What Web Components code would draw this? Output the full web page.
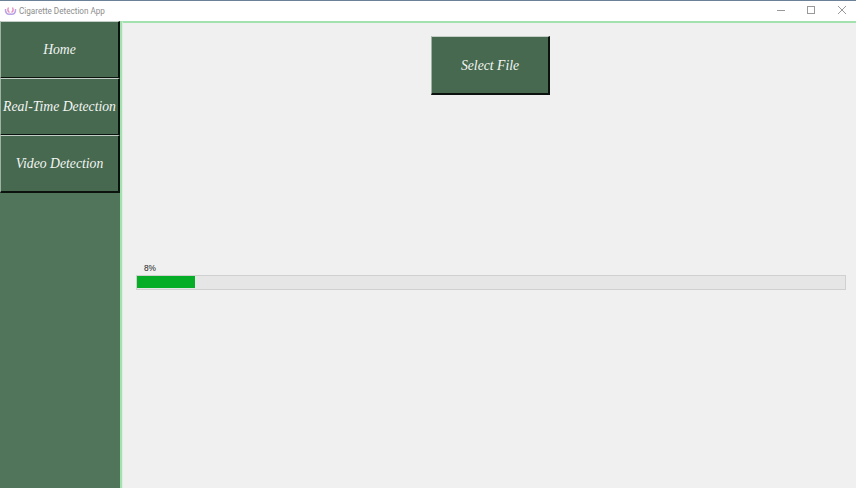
<!DOCTYPE html>
<html>
<head>
<meta charset="utf-8">
<title>Cigarette Detection App</title>
<style>
  html, body { margin: 0; height: 100%; overflow: hidden; background: #f0f0f0; }
</style>
</head>
<body>
<app-window title-text="Cigarette Detection App">
  <side-nav slot="nav">
    <nav-button>Home</nav-button>
    <nav-button>Real-Time Detection</nav-button>
    <nav-button>Video Detection</nav-button>
  </side-nav>
  <file-panel percent="8"></file-panel>
</app-window>

<script>
(() => {
  const GREEN__BUTTON = '#46694f';
  const GREEN__SIDE = '#50755a';
  const FONT__SERIF = '"Liberation Serif", "Times New Roman", serif';

  class AppWindow extends HTMLElement {
    constructor() {
      super();
      this.attachShadow({ mode: 'open' });
    }

    connectedCallback() {
      this.shadowRoot.innerHTML = `
        <style>
          *, *::before, *::after { box-sizing: border-box; }

          :host {
            width: 856px;
            height: 488px;
            display: flex;
            flex-direction: column;
            overflow: hidden;
          }

          .title-bar {
            height: 21px;
            flex: none;
            display: flex;
            align-items: center;
            background: #fff;
            border-top: solid 1px #6b8198;
            font: 8.15px Roboto, "Liberation Sans", Arial, sans-serif;
            color: #8d8d8d;
          }
          .logo { margin: 0 2px 0 4px; flex: none; }
          .title { flex: 1; }
          .controls { display: flex; height: 100%; }
          .controls svg { width: 31px; height: 20px; display: block; }

          .body {
            flex: 1;
            min-height: 0;
            display: flex;
          }
          .nav {
            width: 122px;
            flex: none;
            background: ${GREEN__SIDE};
            border-right: solid 2px #a3e2ae;
          }
          .main {
            flex: 1;
            min-width: 0;
            background: #f0f0f0;
            border-top: solid 2px #a3e2ae;
            border-left: solid 1px #dcefe0;
          }
        </style>

        <div class="title-bar">
          <svg class="logo" width="13" height="11" viewBox="0 0 13 11" fill="none">
            <path d="M1.500 3C1 7 3.500 9 6.500 8C9.500 9 12 7 11.500 3" stroke="#b9a4e6" stroke-width="1.500"/>
            <path d="M4.500 1.500C3.500 3.500 4 5.500 5.500 6.500M8.500 1.500C9.500 3.500 9 5.500 7.500 6.500" stroke="#e98fc0" stroke-width="1.400"/>
          </svg>
          <span class="title">${this.getAttribute('title-text')}</span>
          <div class="controls">
            <svg viewBox="0 0 31 20" fill="none" stroke="#999">
              <path d="M14 9.500H22"/>
            </svg>
            <svg viewBox="0 0 31 20" fill="none" stroke="#999">
              <rect x="13.500" y="5.500" width="7" height="7"/>
            </svg>
            <svg viewBox="0 0 31 20" fill="none" stroke="#999">
              <path d="M13 5L21 13M21 5L13 13"/>
            </svg>
          </div>
        </div>

        <div class="body">
          <div class="nav"><slot name="nav"></slot></div>
          <div class="main"><slot></slot></div>
        </div>
      `;
    }
  }

  class SideNav extends HTMLElement {
    constructor() {
      super();
      this.attachShadow({ mode: 'open' });
    }

    connectedCallback() {
      this.shadowRoot.innerHTML = `
        <style>
          :host { display: flex; flex-direction: column; width: 120px; }
          ::slotted(nav-button:not(:last-child)) { margin-bottom: -1px; }
        </style>
        <slot></slot>
      `;
    }
  }

  // raised tk-style button, the sidebar and the panel use the same bevel
  const BEVEL = `
    background: ${GREEN__BUTTON};
    border-style: solid;
    border-width: 1px 2px 2px 1px;
    border-color: #c3cfc6 #0c120e #0c120e #9fb2a4;
    color: #f4f6f4;
    font: italic 13.7px ${FONT__SERIF};
    white-space: nowrap;
    display: flex;
    align-items: center;
    justify-content: center;
  `;

  class NavButton extends HTMLElement {
    constructor() {
      super();
      this.attachShadow({ mode: 'open' });
    }

    connectedCallback() {
      this.shadowRoot.innerHTML = `
        <style>
          :host {
            box-sizing: border-box;
            height: 58px;
            position: relative;
            ${BEVEL}
          }
        </style>
        <slot></slot>
      `;
    }
  }

  class FilePanel extends HTMLElement {
    get percent() {
      return +(this.getAttribute('percent') || 0);
    }

    constructor() {
      super();
      this.attachShadow({ mode: 'open' });
    }

    connectedCallback() {
      this.shadowRoot.innerHTML = `
        <style>
          *, *::before, *::after { box-sizing: border-box; }

          :host {
            display: flex;
            flex-direction: column;
            height: 100%;
            padding: 13px 10px 0 13px;
          }

          .select {
            width: 119px;
            height: 59px;
            margin-left: 295px;
            padding-top: 1px;
            flex: none;
            ${BEVEL}
          }

          .label {
            margin: 167px 0 0 8px;
            height: 13px;
            font: 8.3px/13px "Liberation Sans", Arial, sans-serif;
            color: #222;
          }

          .track {
            height: 15px;
            background: #e6e6e6;
            border: solid 1px #d0d0d0;
            padding-bottom: 1px;
          }
          .fill { height: 100%; background: #06ad26; }
        </style>

        <div class="select">Select File</div>
        <div class="label">${this.percent}%</div>
        <div class="track"><div class="fill" style="width: ${this.percent + 0.2}%"></div></div>
      `;
    }
  }

  window.customElements.define('app-window', AppWindow);
  window.customElements.define('side-nav', SideNav);
  window.customElements.define('nav-button', NavButton);
  window.customElements.define('file-panel', FilePanel);
})();
</script>
</body>
</html>
